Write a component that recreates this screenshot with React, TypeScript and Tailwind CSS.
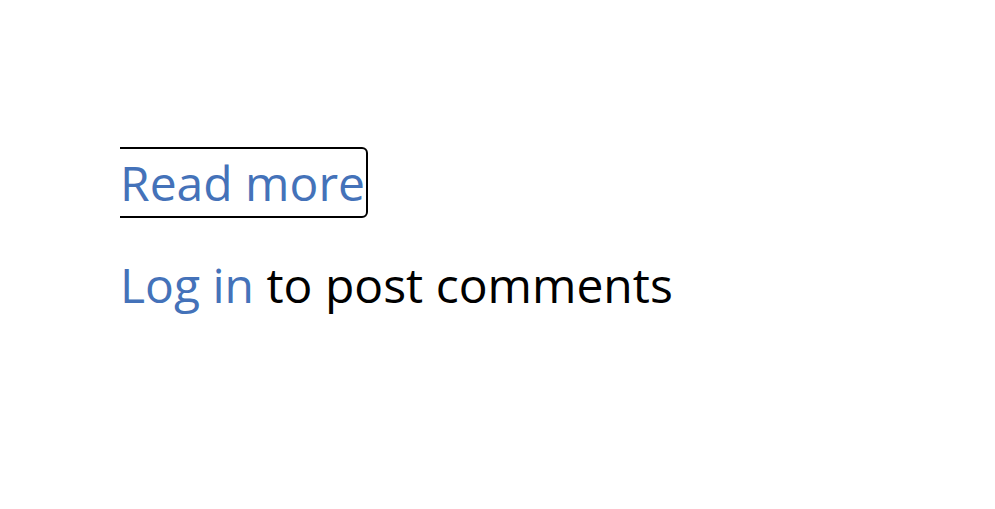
export default function App() {
  return (
    <div className="min-h-[509px] w-full bg-white font-['Open_Sans',sans-serif] text-[48px] leading-[72px]">
      <div className="ml-[120px] overflow-hidden pt-[147px]">
        <div>
          <a
            href="#"
            className="-ml-[4px] rounded-[3px] pl-[4px] text-[#4472b9] no-underline outline-2 outline-offset-1 outline-black outline-solid"
          >
            Read more
          </a>
        </div>
        <div className="mt-[30px] text-black">
          <a href="#" className="text-[#4472b9] no-underline">
            Log in
          </a>{' '}
          to post comments
        </div>
      </div>
    </div>
  )
}
